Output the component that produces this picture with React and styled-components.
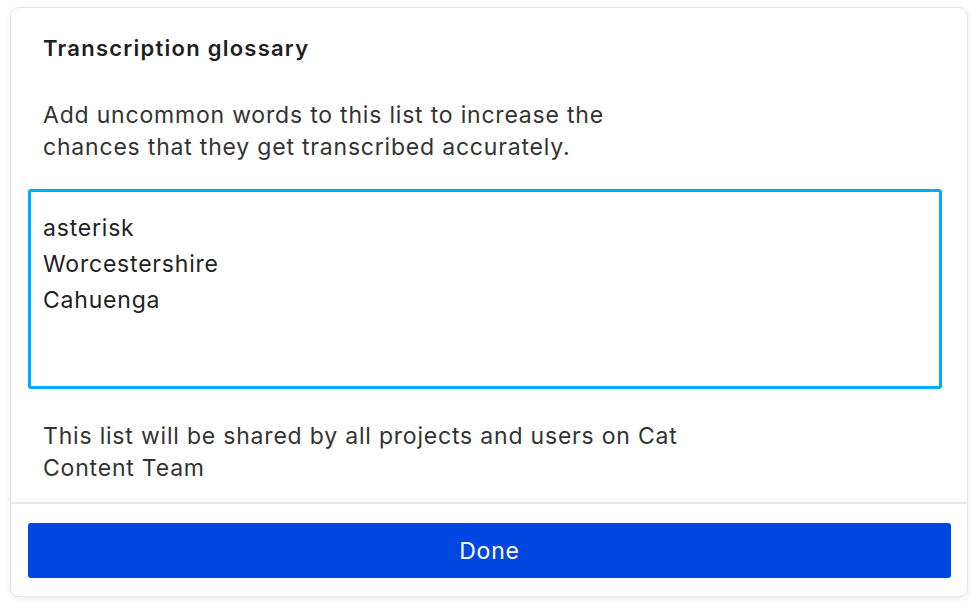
import React from "react";
import styled, { createGlobalStyle } from "styled-components";

const Global = createGlobalStyle`
  html, body { margin: 0; padding: 0; background: #ffffff; }
  body { font-family: Inter, "Noto Sans", sans-serif; -webkit-font-smoothing: antialiased; }
  * { box-sizing: border-box; }
`;

const Page = styled.div`
  padding: 7px 9px 12px 10px;
`;

const Card = styled.div`
  width: 958px;
  height: 590px;
  background: #fff;
  border: 1px solid #e4e4e4;
  border-radius: 9px;
  box-shadow: 0 2px 6px rgba(0, 0, 0, 0.08);
  display: flex;
  flex-direction: column;
  overflow: hidden;
  letter-spacing: 0.8px;
`;

const Body = styled.div`
  flex: 1;
  padding: 24px 25px 0 17px;
  display: flex;
  flex-direction: column;
`;

const Title = styled.h2`
  margin: 0;
  padding-left: 15px;
  font-size: 22px;
  line-height: 32px;
  font-weight: 600;
  letter-spacing: 1.25px;
  color: #1f1f1f;
`;

const Text = styled.p`
  margin: ${(p) => p.$margin || "0"};
  padding-left: 15px;
  max-width: 665px;
  font-size: 23px;
  line-height: 32px;
  font-weight: 400;
  color: #333;
`;

const Area = styled.textarea`
  display: block;
  width: 100%;
  height: 200px;
  margin-top: 26px;
  padding: 18px 12px 16px;
  border: 3px solid #00aaff;
  border-radius: 3px;
  outline: none;
  resize: none;
  font-family: inherit;
  font-size: 23px;
  line-height: 36px;
  letter-spacing: 0.8px;
  color: #222;
  background: #fff;
`;

const Divider = styled.div`
  height: 2px;
  background: #e8e8e8;
`;

const Footer = styled.div`
  padding: 19px 16px 18px 17px;
`;

const Button = styled.button`
  display: block;
  width: 100%;
  height: 55px;
  border: none;
  border-radius: 3px;
  background: #0046e0;
  color: #fff;
  font-family: inherit;
  font-size: 23px;
  font-weight: 400;
  letter-spacing: 0.8px;
  cursor: pointer;
`;

export default function App() {
  return (
    <>
      <Global />
      <Page>
        <Card>
          <Body>
            <Title>Transcription glossary</Title>
            <Text $margin="35px 0 0 0">
              Add uncommon words to this list to increase the chances that they get transcribed accurately.
            </Text>
            <Area defaultValue={"asterisk\nWorcestershire\nCahuenga"} spellCheck={false} />
            <Text $margin="31px 0 0 0">
              This list will be shared by all projects and users on Cat Content Team
            </Text>
          </Body>
          <Divider />
          <Footer>
            <Button>Done</Button>
          </Footer>
        </Card>
      </Page>
    </>
  );
}
